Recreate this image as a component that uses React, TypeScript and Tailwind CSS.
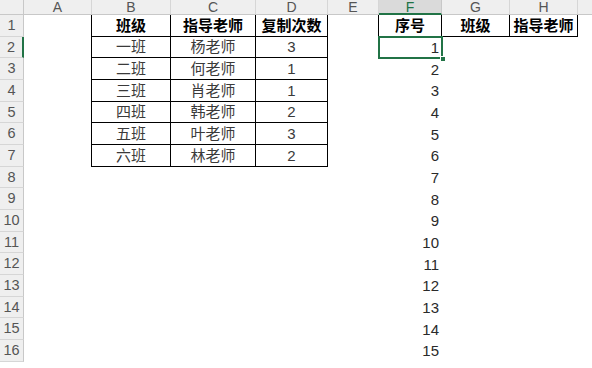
const cols = [
  { key: "A", w: "w-[68px]" },
  { key: "B", w: "w-[79px]" },
  { key: "C", w: "w-[85px]" },
  { key: "D", w: "w-[72px]" },
  { key: "E", w: "w-[51px]" },
  { key: "F", w: "w-[63px]" },
  { key: "G", w: "w-[68px]" },
  { key: "H", w: "w-[68px]" },
];

const classes = [
  ["一班", "杨老师", "3"],
  ["二班", "何老师", "1"],
  ["三班", "肖老师", "1"],
  ["四班", "韩老师", "2"],
  ["五班", "叶老师", "3"],
  ["六班", "林老师", "2"],
];

const font = "font-['Liberation_Sans','Noto_Sans_CJK_SC',sans-serif]";

const Cell = ({
  w,
  className = "",
  children,
}: {
  w: string;
  className?: string;
  children?: React.ReactNode;
}) => (
  <div className={`${w} shrink-0 h-full flex items-center relative ${className}`}>
    {children}
  </div>
);

const App = () => {
  const rows = Array.from({ length: 16 }, (_, i) => i + 1);

  return (
    <div className={`w-[592px] h-[368px] overflow-hidden bg-white ${font}`}>
      {/* column header */}
      <div className="flex h-[15px] bg-[#efefef] border-b border-[#c8c8c8] text-[14px] text-[#555] leading-none">
        <div className="w-[24px] shrink-0 border-r border-[#c8c8c8]" />
        {cols.map((c) =>
          c.key === "F" ? (
            <div
              key={c.key}
              className={`${c.w} shrink-0 flex items-center justify-center bg-[#dadada] text-[#217346] border-r border-[#c8c8c8] border-b-2 border-b-[#217346] -mb-px`}
            >
              {c.key}
            </div>
          ) : (
            <div
              key={c.key}
              className={`${c.w} shrink-0 flex items-center justify-center border-r border-[#d6d6d6]`}
            >
              {c.key}
            </div>
          )
        )}
        <div className="flex-1" />
      </div>

      {rows.map((r) => (
        <div key={r} className="flex h-[21.67px] text-[15px] leading-none">
          <div
            className={`w-[24px] shrink-0 h-full flex items-center justify-center bg-[#efefef] text-[14.5px] text-[#555] border-b border-[#d6d6d6] ${
              r === 2 ? "border-r-2 border-r-[#217346]" : "border-r border-r-[#c8c8c8]"
            }`}
          >
            {r}
          </div>

          {/* A */}
          <Cell w="w-[68px]" className={r <= 7 ? "border-r border-black" : ""} />

          {/* B C D */}
          {r === 1 ? (
            <>
              <Cell w="w-[79px]" className="justify-center font-bold text-black border-r border-b border-black">班级</Cell>
              <Cell w="w-[85px]" className="justify-center font-bold text-black border-r border-b border-black">指导老师</Cell>
              <Cell w="w-[72px]" className="justify-center font-bold text-black border-r border-b border-black">复制次数</Cell>
            </>
          ) : r <= 7 ? (
            <>
              <Cell w="w-[79px]" className="justify-center text-[#3a3a3a] border-r border-b border-black">{classes[r - 2][0]}</Cell>
              <Cell w="w-[85px]" className="justify-center text-[#3a3a3a] border-r border-b border-black">{classes[r - 2][1]}</Cell>
              <Cell w="w-[72px]" className="justify-center text-[#3a3a3a] border-r border-b border-black">{classes[r - 2][2]}</Cell>
            </>
          ) : (
            <>
              <Cell w="w-[79px]" />
              <Cell w="w-[85px]" />
              <Cell w="w-[72px]" />
            </>
          )}

          {/* E */}
          <Cell w="w-[51px]" className={r === 1 ? "border-r border-black" : ""} />

          {/* F G H */}
          {r === 1 ? (
            <>
              <Cell w="w-[63px]" className="justify-center font-bold text-black border-r border-b border-black">序号</Cell>
              <Cell w="w-[68px]" className="justify-center font-bold text-black border-r border-b border-black">班级</Cell>
              <Cell w="w-[68px]" className="justify-center font-bold text-black border-r border-b border-black whitespace-nowrap">指导老师</Cell>
            </>
          ) : (
            <>
              <Cell w="w-[63px]" className="justify-end pr-[3px] text-[#2a2a2a] text-[15px]">
                {r - 1}
                {r === 2 && (
                  <>
                    <div className="absolute -left-px -top-px -right-px -bottom-px border-2 border-[#217346]" />
                    <div className="absolute -right-[4px] -bottom-[4px] w-[6px] h-[6px] bg-[#217346] border border-white" />
                  </>
                )}
              </Cell>
              <Cell w="w-[68px]" />
              <Cell w="w-[68px]" />
            </>
          )}
          <div className="flex-1" />
        </div>
      ))}
    </div>
  );
};

export default App;
